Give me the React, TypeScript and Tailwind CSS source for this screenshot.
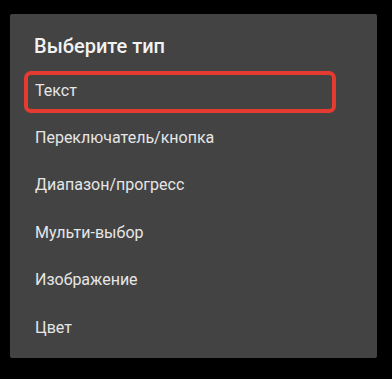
const ITEMS = [
  "Текст",
  "Переключатель/кнопка",
  "Диапазон/прогресс",
  "Мульти-выбор",
  "Изображение",
  "Цвет",
];

export default function App() {
  return (
    <div
      className="w-[392px] h-[379px] bg-black pt-[14px] pl-[10px]"
      style={{ fontFamily: "Roboto, 'Noto Sans', sans-serif" }}
    >
      <div className="relative w-[367px] h-[344px] bg-[#434343] rounded-[2px] shadow-lg">
        {/* Title */}
        <div className="pt-[20px] pl-[24px] text-[20px] leading-[24px] font-medium text-[#f2f2f2]">
          Выберите тип
        </div>

        {/* Options */}
        <ul className="mt-[9px]">
          {ITEMS.map((item) => (
            <li
              key={item}
              className="h-[47.4px] flex items-center pl-[25px] text-[16px] leading-[24px] text-[#e6e6e6]"
            >
              {item}
            </li>
          ))}
        </ul>

        {/* Highlight annotation */}
        <div className="absolute left-[14px] top-[57px] w-[312px] h-[42px] border-[4px] border-[#e53b30] rounded-[7px]" />
      </div>
    </div>
  );
}
